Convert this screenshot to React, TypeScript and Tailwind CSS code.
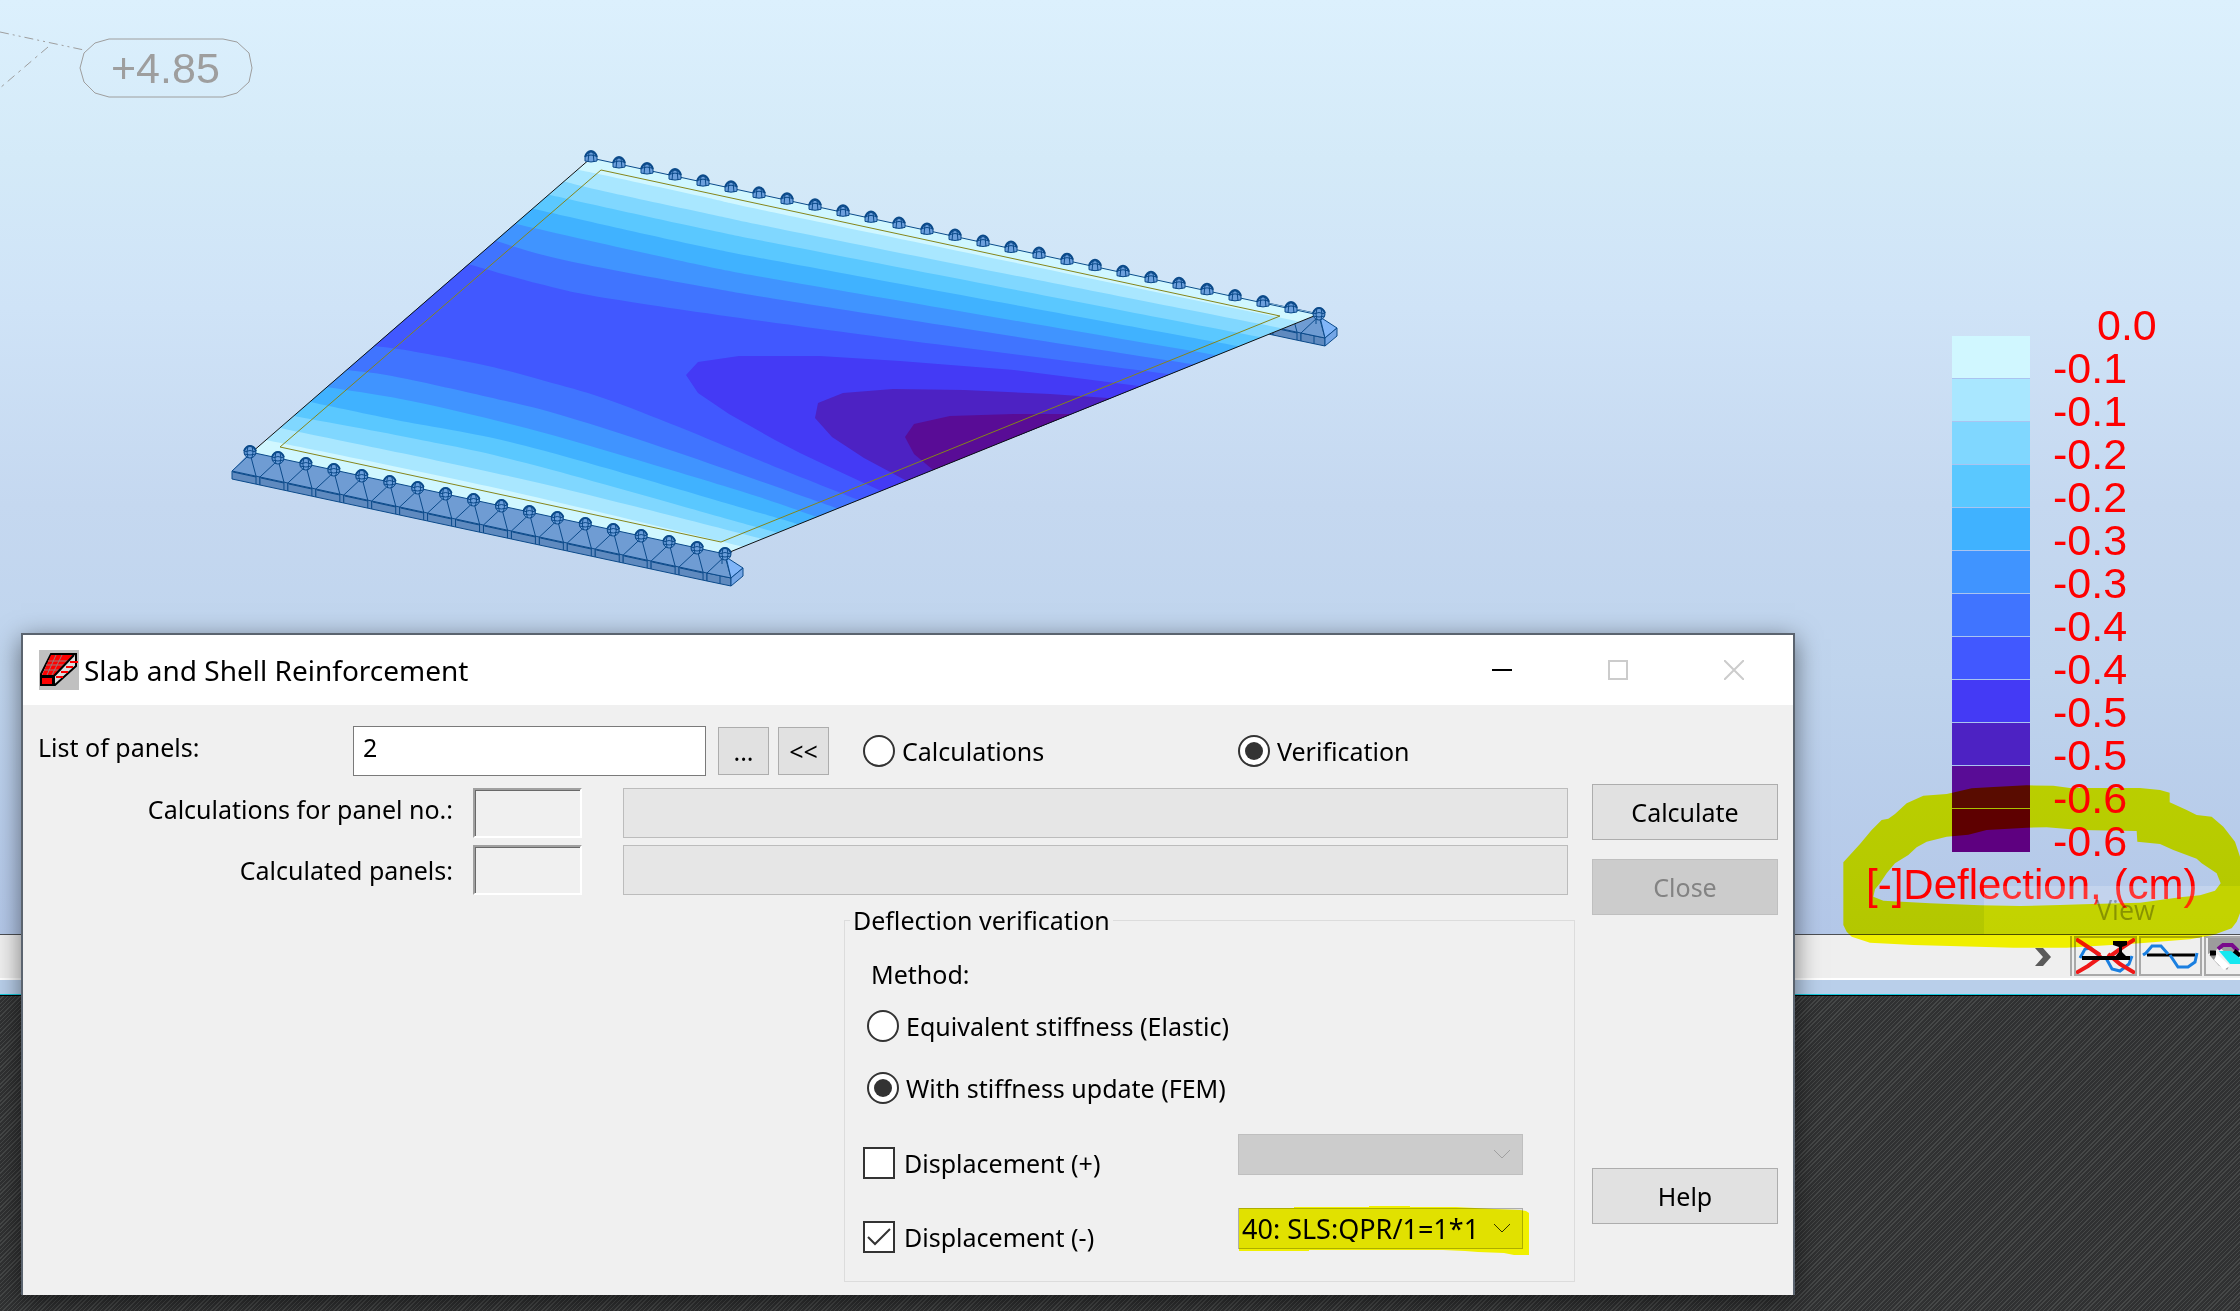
import React from "react";

type Point = [number, number];

const LEGEND_COLORS = [
  "#d0f7ff",
  "#a9e7ff",
  "#80d7ff",
  "#5ac8ff",
  "#40b2ff",
  "#4094ff",
  "#4074ff",
  "#4158ff",
  "#443af5",
  "#4d22c3",
  "#590c96",
  "#5e0080",
];

const LEGEND_LABELS = [
  "0.0",
  "-0.1",
  "-0.1",
  "-0.2",
  "-0.2",
  "-0.3",
  "-0.3",
  "-0.4",
  "-0.4",
  "-0.5",
  "-0.5",
  "-0.6",
  "-0.6",
];

// Each band runs from the left edge of the slab to the right one.
const BANDS: { color: string; upper: Point[]; lower: Point[] }[] = [
  {
    color: "#a9e7ff",
    upper: [[579, 170], [603, 175], [700, 196], [800, 218], [1296, 321]],
    lower: [[266, 440], [496, 488], [740, 546]],
  },
  {
    color: "#80d7ff",
    upper: [[566, 182], [603, 191], [700, 212], [820, 237], [1280, 328]],
    lower: [[280, 428], [526, 480], [759, 538]],
  },
  {
    color: "#5ac8ff",
    upper: [[550, 195], [700, 228], [820, 252], [1260, 337]],
    lower: [[294, 416], [411, 438], [526, 463], [760, 528], [778, 531]],
  },
  {
    color: "#40b2ff",
    upper: [[534, 209], [700, 246], [820, 269], [1238, 346]],
    lower: [[310, 402], [396, 420], [526, 446], [760, 513], [797, 524]],
  },
  {
    color: "#4094ff",
    upper: [[516, 224], [700, 265], [820, 287], [1215, 355]],
    lower: [[327, 387], [411, 401], [526, 428], [641, 461], [756, 496], [814, 516]],
  },
  {
    color: "#4074ff",
    upper: [[496, 241], [564, 260], [700, 286], [820, 306], [1192, 364]],
    lower: [[346, 370], [392, 376], [488, 397], [564, 416], [679, 453], [836, 508]],
  },
  {
    color: "#4158ff",
    upper: [[468, 264], [540, 284], [612, 299], [820, 329], [1168, 374]],
    lower: [[374, 346], [411, 351], [488, 366], [545, 381], [603, 398], [679, 427], [756, 459], [856, 499]],
  },
];

// Closed peaks that open onto the right edge, clockwise from their lower end.
const PEAKS = [
  {
    color: "#443af5",
    points:
      "879,490 836,470 800,453 775,440 729,414 698,393 686,375 698,362 739,356 820,356 900,361 1014,370 1139,386 1160,388 900,500",
  },
  {
    color: "#4d22c3",
    points:
      "905,480 864,458 832,437 815,418 818,403 843,393 893,389 964,390 1050,394 1108,398 1130,400 920,490",
  },
  {
    color: "#590c96",
    points: "932,469 914,454 905,437 914,424 950,416 1014,414 1069,414 1090,416 950,480",
  },
];

function curve(points: Point[]) {
  let d = "";
  for (let i = 0; i < points.length - 1; i++) {
    const p0 = points[Math.max(i - 1, 0)];
    const p1 = points[i];
    const p2 = points[i + 1];
    const p3 = points[Math.min(i + 2, points.length - 1)];
    const c1 = [p1[0] + (p2[0] - p0[0]) / 6, p1[1] + (p2[1] - p0[1]) / 6];
    const c2 = [p2[0] - (p3[0] - p1[0]) / 6, p2[1] - (p3[1] - p1[1]) / 6];
    d += `C${c1[0]},${c1[1]} ${c2[0]},${c2[1]} ${p2[0]},${p2[1]}`;
  }
  return d;
}

function bandPath(upper: Point[], lower: Point[]) {
  const back = [...lower].reverse();
  const [ux, uy] = upper[0];
  const [ex, ey] = upper[upper.length - 1];
  const [lx, ly] = back[0];
  const [sx, sy] = back[back.length - 1];
  return (
    `M${ux - 14},${uy - 3}L${ux},${uy}${curve(upper)}L${ex + 14},${ey + 3}` +
    `L${lx + 14},${ly + 3}L${lx},${ly}${curve(back)}L${sx - 14},${sy - 3}Z`
  );
}

function Dome() {
  return (
    <>
      <path d="M-6 4L-6 0Q-4 -5 0 -5Q4 -5 6 0L6 4Q0 6 -6 4Z" fill="#6c9fdc" stroke="#0b4a8a" strokeWidth="1" />
      <path d="M-6 0Q-4 -6 0 -6Q4 -6 6 0" fill="none" stroke="#0b4a8a" strokeWidth="2" />
      <path d="M-5 -1Q0 -3 5 -1M-2 -5L-3 5M2 -5L3 5" fill="none" stroke="#0b4a8a" strokeWidth="1" />
    </>
  );
}

function Ball() {
  return (
    <>
      <circle r="6" fill="#6c9fdc" stroke="#0b4a8a" strokeWidth="1" />
      <path d="M-6 -1Q-4 -6 0 -6Q4 -6 6 -1" fill="none" stroke="#0b4a8a" strokeWidth="2" />
      <path d="M-6 0Q0 -3 6 0M-6 2Q0 4 6 2M-2 -6Q-4 0 -2 6M2 -6Q4 0 2 6" fill="none" stroke="#0b4a8a" strokeWidth="1" />
    </>
  );
}

function SupportBlock({ x, y, end = false }: { x: number; y: number; end?: boolean }) {
  return (
    <g transform={`translate(${x} ${y})`} stroke="#0b4a8a" strokeWidth="1" strokeLinejoin="round">
      {end ? (
        <>
          <path d="M-18 19L6 24V32L-18 27ZM-5 22V30" fill="#5f8abf" />
          <path d="M0 2L-18 19L6 24Z" fill="#6f9cd3" />
          <path d="M1 3L18 14L6 24Z" fill="#80b5f8" />
          <path d="M18 14V22L6 32V24Z" fill="#74a6e6" />
          <path d="M-3 6V10" />
        </>
      ) : (
        <>
          <path d="M0 0L28 6L20 28L6 24L-18 19Z" fill="#6f9cd3" stroke="none" />
          <path d="M-18 19L10 25L10 33L-18 27Z" fill="#5f8abf" />
          <path d="M6 24V32M-17 20L6 25M0 0L28 6" fill="none" />
          <path d="M-3 5L-18 19M1 5L6 24" fill="none" />
        </>
      )}
    </g>
  );
}

function SlabView() {
  const top = Array.from({ length: 27 }, (_, i) => ({ x: 591 + i * 28, y: 157 + (i * 157) / 26 }));
  const bottom = Array.from({ length: 18 }, (_, i) => ({ x: 250 + (i * 475) / 17, y: 452 + (i * 102) / 17 }));

  return (
    <svg width="1400" height="620" viewBox="0 0 1400 620" role="img" aria-label="Slab deflection map">
      <defs>
        <clipPath id="slab">
          <path d="M591 158L1319 314L725 554L251 453Z" />
        </clipPath>
      </defs>

      <g fill="none" stroke="#9e9e9e" strokeWidth="1">
        <path d="M0 32L84 50" strokeDasharray="9 4 2 4 2 4" />
        <path d="M48 47L0 88" strokeDasharray="9 5 3 5" />
        <path d="M80 68L84 53L95 43L109 39H223L237 42L249 53L252 68L249 82L237 93L223 97H109L95 93L84 82Z" />
      </g>
      <text x="111" y="83" fill="#9e9e9e" className="font-['Liberation_Sans',sans-serif] text-[43px]">
        +4.85
      </text>

      <SupportBlock x={1263} y={302} />
      <SupportBlock x={1291} y={308} />
      <SupportBlock x={1319} y={314} end />

      <g clipPath="url(#slab)">
        <rect x="230" y="140" width="1110" height="430" fill="#d0f7ff" />
        {BANDS.map((band) => (
          <path key={band.color} d={bandPath(band.upper, band.lower)} fill={band.color} />
        ))}
        {PEAKS.map((peak) => (
          <polygon key={peak.color} points={peak.points} fill={peak.color} />
        ))}
      </g>
      <path d="M591 158L251 453M1319 314L725 554" stroke="#111" strokeWidth="1" />
      <path d="M601 170L1280 316L721 542L280 447Z" fill="none" stroke="#85851a" strokeWidth="1" />

      <path d="M591 158L1319 315" stroke="#0b4a8a" strokeWidth="1" />
      {top.map((p, i) => (
        <g key={i} transform={`translate(${p.x} ${p.y})`}>
          {i === 26 ? <Ball /> : <Dome />}
        </g>
      ))}

      {bottom.map((p, i) => (
        <SupportBlock key={i} x={p.x} y={p.y} end={i === 17} />
      ))}
      {bottom.map((p, i) => (
        <g key={i} transform={`translate(${p.x} ${p.y})`}>
          <Ball />
        </g>
      ))}
    </svg>
  );
}

function Legend() {
  return (
    <aside className="mr-11 w-[330px] pt-[304px] font-['Liberation_Sans',Arial,sans-serif] text-[#ff0000]">
      <div className="flex pl-[86px]">
        <div className="w-[78px] pt-8">
          {LEGEND_COLORS.map((color) => (
            <div
              key={color}
              className="h-[43px] border-b border-[#a9c4f0] last:border-b-0"
              style={{ backgroundColor: color }}
            />
          ))}
        </div>
        <ul className="ml-[23px] text-[43px] leading-[43px]">
          {LEGEND_LABELS.map((label, i) => (
            <li key={i} className="first:pl-11">
              {label}
            </li>
          ))}
        </ul>
      </div>
      <p className="whitespace-nowrap text-[42px] leading-[43px]">[-]Deflection, (cm)</p>
    </aside>
  );
}

function LegendMarker() {
  return (
    <svg
      className="pointer-events-none absolute top-[780px] right-0 h-[170px] w-[400px] mix-blend-multiply"
      viewBox="180 360 1200 510"
      aria-hidden="true"
    >
      <path
        fill="#ffff00"
        fillRule="evenodd"
        d="M190 607L240 552L275 510L305 480L325 476L345 462L380 430L430 407L500 402L530 395L575 385L640 381L740 376L820 377L870 384H1080L1140 390L1169 398V427L1220 450L1250 465L1295 470L1330 500L1365 545L1380 590V760L1370 785L1355 805L1300 825L1230 838L1080 850L860 863H700L400 855L270 848L215 830L200 815L190 795Z
        M280 710L285 688L300 670L320 640L345 610L385 585L410 562L440 545L500 530L565 524L620 510L740 503L800 502L900 510L1070 513L1072 545L1140 552L1180 570L1250 596L1265 610L1310 640L1322 670L1305 692L1260 706L1200 712L1080 728L910 733L840 735L720 738L600 736L450 730L310 722Z"
      />
    </svg>
  );
}

const toolButton = "h-10 w-[63px] shrink-0 overflow-hidden border-2 border-[#a9a9a9] bg-[#efefef]";

function ViewToolbar() {
  return (
    <div className="flex h-[46px] justify-end gap-0.5 overflow-hidden border-t border-b-2 border-t-[#4c4f54] border-b-white bg-[#efefef] pt-px">
      <button type="button" aria-label="More tools" className="mr-3 flex items-center">
        <svg width="16" height="18" viewBox="0 0 16 18">
          <path d="M0 0H8L16 9L8 18H0L8 9Z" fill="#5a5a5a" />
        </svg>
      </button>
      <span className="h-10 w-[7px] border-r-2 border-[#a9a9a9]" />
      <button type="button" aria-label="Diagrams off" className={toolButton}>
        <svg width="59" height="36" viewBox="0 0 59 36" fill="none">
          <path d="M4 20L9 11L15 10L25 20M30 20L36 31L44 33L53 26L56 18" stroke="#1a7fe0" strokeWidth="3" />
          <path d="M0 1L12 9L24 17M0 35L12 28L26 18" stroke="#f01818" strokeWidth="4" />
          <path d="M59 1L47 9L33 19M32 16L44 26L59 35" stroke="#f01818" strokeWidth="4" />
          <path d="M6 20H54" stroke="#000" strokeWidth="4" />
          <path d="M37 3H51V7L46 9V14L52 20H38L43 14V9L37 7Z" fill="#000" />
        </svg>
      </button>
      <button type="button" aria-label="Diagrams" className={toolButton}>
        <svg width="59" height="36" viewBox="0 0 59 36" fill="none">
          <path d="M6 17H54" stroke="#000" strokeWidth="3" />
          <path d="M2 17L5 15L11 8H20L27 16M29 17L37 29H47L54 24L56 15" stroke="#1a7fe0" strokeWidth="3" />
        </svg>
      </button>
      <button type="button" aria-label="Maps" className="h-10 w-9 shrink-0 overflow-hidden border-2 border-r-0 border-[#a9a9a9]">
        <svg width="34" height="36" viewBox="0 0 34 36" fill="none">
          <rect width="34" height="36" fill="#efefef" />
          <path d="M2 0H34V12L26 20L14 10L2 16Z" fill="#9c9c9c" />
          <path d="M5 16L14 26L22 30" stroke="#8e8e8e" strokeWidth="4" />
          <path d="M12 11L17 7H26L32 13" stroke="#7a0a8c" strokeWidth="4" />
          <path d="M4 15H10M28 13L34 18" stroke="#000" strokeWidth="5" />
          <path d="M13 13H25L34 20V26H24Z" fill="#16e8f0" />
          <path d="M11 16L24 28L18 32L8 22Z" fill="#fff" />
        </svg>
      </button>
    </div>
  );
}

function ReinforcementIcon() {
  return (
    <svg width="40" height="40" viewBox="0 0 40 40" aria-hidden="true">
      <rect width="40" height="40" fill="#c0c0c0" />
      <path d="M12 4H37V16L16 35H2V24Z" fill="#dcdcdc" stroke="#000" strokeWidth="2" />
      <path d="M12 5H34L17 25H3Z" fill="#f00" />
      <path d="M9 11H29M7 15H26M5 20H22M17 5L8 25M23 5L13 25" stroke="#9a7a7a" strokeWidth="1" />
      <path d="M35 5L15 26V35M2 26H15" fill="none" stroke="#000" strokeWidth="2" />
      <path d="M31 12H39M27 17H34M22 22H29M17 27H24" stroke="#f00" strokeWidth="2" />
      <rect x="2" y="27" width="12" height="8" fill="#f00" stroke="#000" strokeWidth="2" />
    </svg>
  );
}

function Radio({ name, label, checked = false }: { name: string; label: string; checked?: boolean }) {
  return (
    <label className="flex h-8 items-center gap-[7px] whitespace-nowrap">
      <input
        type="radio"
        name={name}
        defaultChecked={checked}
        className="grid size-8 shrink-0 appearance-none place-content-center rounded-full border-2 border-[#333] bg-white before:size-[18px] before:rounded-full checked:before:bg-[#333]"
      />
      {label}
    </label>
  );
}

function Checkbox({ label, checked = false }: { label: string; checked?: boolean }) {
  return (
    <label className="mt-[13px] flex h-8 w-[375px] items-center gap-[9px]">
      <span className="relative size-8">
        <input
          type="checkbox"
          defaultChecked={checked}
          className="peer block size-8 appearance-none border-2 border-[#333] bg-white"
        />
        <svg
          viewBox="0 0 32 32"
          className="pointer-events-none absolute inset-0 hidden size-8 peer-checked:block"
          fill="none"
          stroke="#333"
          strokeWidth="2"
        >
          <path d="M5 16L12 23L27 8" />
        </svg>
      </span>
      {label}
    </label>
  );
}

function Chevron({ color }: { color: string }) {
  return (
    <svg
      width="18"
      height="10"
      viewBox="0 0 18 10"
      fill="none"
      stroke={color}
      className="pointer-events-none absolute top-[15px] right-3"
    >
      <path d="M1 1L9 9L17 1" />
    </svg>
  );
}

const button = "border border-[#adadad] bg-[#e1e1e1]";
const sunken =
  "ml-5 h-[50px] w-[109px] border-2 border-t-[#a0a0a0] border-r-white border-b-white border-l-[#a0a0a0] bg-transparent shadow-[inset_1px_1px_0_#696969]";
const progress = "mr-[7px] ml-[41px] h-[50px] flex-1 border border-[#bcbcbc] bg-[#e6e6e6]";

function ReinforcementDialog() {
  return (
    <section
      role="dialog"
      aria-labelledby="dialog-title"
      className="absolute top-[633px] right-[445px] left-[21px] border-x-2 border-t-2 border-[#5b646f] bg-[#f0f0f0] font-['Noto_Sans','Open_Sans',sans-serif] text-[25px] leading-[26px] text-black shadow-[0_6px_24px_rgba(0,0,0,0.5)]"
    >
      <header className="flex h-[70px] items-center bg-white pr-px pl-4">
        <ReinforcementIcon />
        <h1 id="dialog-title" className="ml-[5px] flex-1 text-[28px]">
          Slab and Shell Reinforcement
        </h1>
        <button type="button" aria-label="Minimize" className="grid h-full w-[116px] place-content-center">
          <svg width="20" height="20" viewBox="0 0 20 20" fill="none" stroke="#000" strokeWidth="2">
            <path d="M0 10H20" />
          </svg>
        </button>
        <button type="button" aria-label="Maximize" disabled className="grid h-full w-[116px] place-content-center">
          <svg width="20" height="20" viewBox="0 0 20 20" fill="none" stroke="#ccc" strokeWidth="2">
            <path d="M1 1H19V19H1Z" />
          </svg>
        </button>
        <button type="button" aria-label="Close window" disabled className="grid h-full w-[116px] place-content-center">
          <svg width="20" height="20" viewBox="0 0 20 20" fill="none" stroke="#ccc" strokeWidth="2">
            <path d="M0 0L20 20M20 0L0 20" />
          </svg>
        </button>
      </header>

      <div className="flex pb-[13px]">
        <div className="flex-1 pt-[21px]">
          <div className="flex h-[50px] items-center">
            <label htmlFor="panels" className="w-[330px] pb-2 pl-[15px]">
              List of panels:
            </label>
            <input
              id="panels"
              type="text"
              defaultValue="2"
              className="h-[50px] w-[353px] border border-[#7a7a7a] bg-white px-[9px] pb-2"
            />
            <button type="button" className={`${button} ml-3 h-12 w-[51px]`}>
              ...
            </button>
            <button type="button" className={`${button} ml-[9px] h-12 w-[51px]`}>
              &lt;&lt;
            </button>
            <div className="ml-[34px] w-[375px]">
              <Radio name="mode" label="Calculations" />
            </div>
            <Radio name="mode" label="Verification" checked />
          </div>

          <div className="mt-3 flex items-center">
            <label htmlFor="current-panel" className="w-[430px] pb-2 text-right">
              Calculations for panel no.:
            </label>
            <input id="current-panel" type="text" readOnly className={sunken} />
            <div className={progress} />
          </div>
          <div className="mt-[7px] flex items-center">
            <label htmlFor="calculated-panels" className="w-[430px] text-right">
              Calculated panels:
            </label>
            <input id="calculated-panels" type="text" readOnly className={sunken} />
            <div className={progress} />
          </div>

          <fieldset className="mt-3 ml-auto w-[731px] border border-[#dcdcdc] pb-7">
            <legend className="ml-[5px] px-[3px]">Deflection verification</legend>
            <p className="mt-[25px] ml-[26px] leading-8">Method:</p>
            <div className="mt-5 ml-[22px] flex flex-col gap-[30px]">
              <Radio name="method" label="Equivalent stiffness (Elastic)" />
              <Radio name="method" label="With stiffness update (FEM)" checked />
            </div>
            <div className="mt-[30px] ml-[18px] flex items-start">
              <Checkbox label="Displacement (+)" />
              <div className="relative w-[285px]">
                <select
                  aria-label="Combination for displacement (+)"
                  disabled
                  className="block h-[41px] w-full appearance-none border border-[#bfbfbf] bg-[#ccc] opacity-100"
                />
                <Chevron color="#a0a0a0" />
              </div>
            </div>
            <div className="mt-[29px] ml-[18px] flex items-start">
              <Checkbox label="Displacement (-)" checked />
              <div className="relative w-[285px]">
                <select
                  aria-label="Combination for displacement (-)"
                  className="block h-[41px] w-full appearance-none border border-[#adadad] bg-[#e1e1e1] pr-[46px] pl-[3px] text-[27px]"
                >
                  <option>40: SLS:QPR/1=1*1</option>
                </select>
                <Chevron color="#333" />
                <svg
                  width="292"
                  height="50"
                  viewBox="0 -2 292 50"
                  className="pointer-events-none absolute -top-0.5 left-0 max-w-none mix-blend-multiply"
                  aria-hidden="true"
                >
                  <path
                    d="M1 0H56V-1H131V-2H172V-1H218L256 1L282 2L288 3L291 5V47H276L266 45L240 44L227 43L205 42H71V43H1Z"
                    fill="#ffff00"
                  />
                </svg>
              </div>
            </div>
          </fieldset>
        </div>

        <div className="mr-[15px] ml-[17px] flex w-[186px] flex-col pt-[79px] pb-[58px]">
          <button type="button" className={`${button} h-14`}>
            Calculate
          </button>
          <button type="button" disabled className="mt-[19px] h-14 border border-[#bfbfbf] bg-[#ccc] text-[#838383]">
            Close
          </button>
          <button type="button" className={`${button} mt-auto h-14`}>
            Help
          </button>
        </div>
      </div>
    </section>
  );
}

export default function App() {
  return (
    <main className="relative isolate flex min-h-screen flex-col overflow-hidden">
      <div className="relative flex h-[934px] items-start justify-between bg-[linear-gradient(#dcf0fd_0%,#d4eaf8_17%,#cfe3f7_33%,#c5d8f0_54%,#bfd4ed_72%,#b3c7e8_100%)]">
        <SlabView />
        <Legend />
        <div className="absolute right-0 bottom-0 h-12 w-64 bg-white/20 pl-[112px] font-['Open_Sans',sans-serif] text-[27px] leading-[48px] text-black/30">
          View
        </div>
      </div>
      <ViewToolbar />
      <div className="h-[15px] border-b border-[#14c8dc] bg-[#b9cfea]" />
      <div className="flex-1 border-t border-black bg-[repeating-linear-gradient(135deg,#303132_0px,#303132_2px,#464848_2px,#464848_3px)]" />
      <LegendMarker />
      <ReinforcementDialog />
    </main>
  );
}
